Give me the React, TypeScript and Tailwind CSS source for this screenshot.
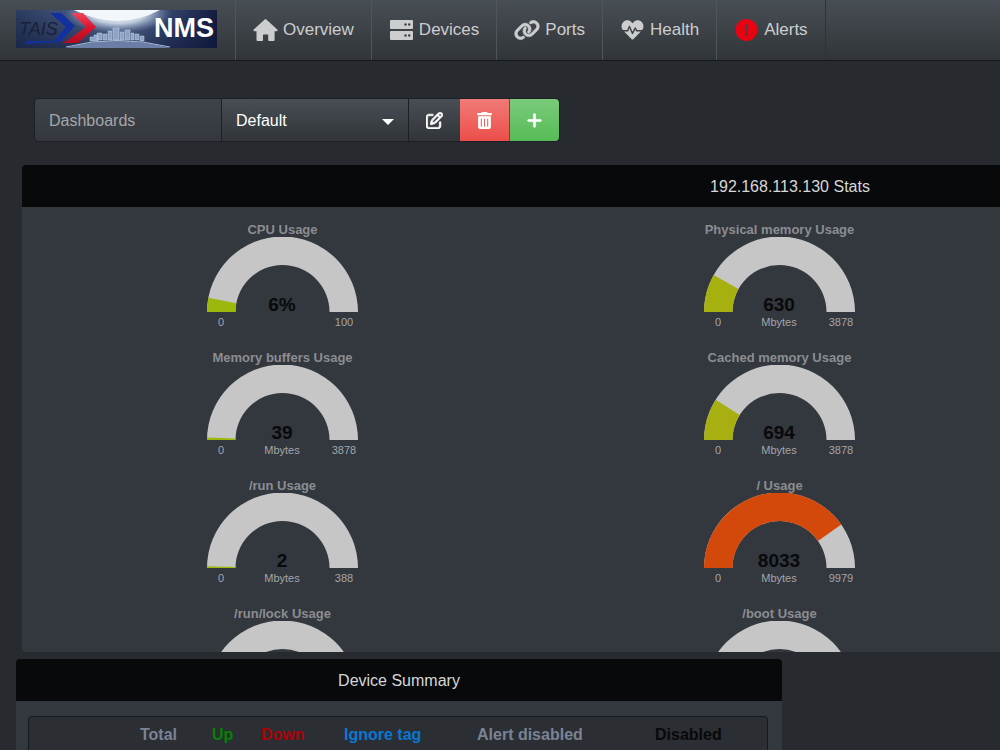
import type { ComponentType, ReactNode } from 'react'
import { FaHeartbeat } from 'react-icons/fa'
import { FaCircleExclamation, FaLink, FaPlus, FaRegPenToSquare, FaTrashCan } from 'react-icons/fa6'

type IconProps = { className?: string }

function HomeIcon({ className }: IconProps) {
  return (
    <svg viewBox="0 0 24 22" fill="currentColor" className={className}>
      <path d="M11.2.4a1.2 1.2 0 0 1 1.6 0l11 10.2c.6.6.2 1.6-.6 1.6h-2.1V21a1 1 0 0 1-1 1h-4.6a.8.8 0 0 1-.8-.8V15.600H9.500v5.600a.8.8 0 0 1-.8.8H4a1 1 0 0 1-1-1v-8.800H.8c-.8 0-1.200-1-.6-1.600Z" />
    </svg>
  )
}

function ServerIcon({ className }: IconProps) {
  return (
    <svg viewBox="0 0 23 22" className={className}>
      <g fill="currentColor">
        <rect y="1" width="23" height="9" rx="1" />
        <rect y="12" width="23" height="9" rx="1" />
      </g>
      <g fill="#3b4046">
        <circle cx="15.500" cy="5.500" r="1.200" />
        <circle cx="19.200" cy="5.500" r="1.200" />
        <circle cx="15.500" cy="16.500" r="1.200" />
        <circle cx="19.200" cy="16.500" r="1.200" />
      </g>
    </svg>
  )
}

type NavItem = {
  label: string
  icon: ComponentType<IconProps>
  iconClass: string
}

const navItems: NavItem[] = [
  { label: 'Overview', icon: HomeIcon, iconClass: 'h-[22px] w-[25px]' },
  { label: 'Devices', icon: ServerIcon, iconClass: 'h-[22px] w-[25px]' },
  { label: 'Ports', icon: FaLink, iconClass: 'h-[22px] w-[26px] stroke-current stroke-[16]' },
  { label: 'Health', icon: FaHeartbeat, iconClass: 'h-[22px] w-[25px]' },
  { label: 'Alerts', icon: FaCircleExclamation, iconClass: 'h-[22px] w-[25px] text-[#e60411]' },
]

type GaugeData = {
  title: string
  value?: number
  max?: number
  unit?: string
  suffix?: string
  color?: string
}

const gauges: GaugeData[] = [
  { title: 'CPU Usage', value: 6, max: 100, suffix: '%', color: '#9cb80d' },
  { title: 'Physical memory Usage', value: 630, max: 3878, unit: 'Mbytes', color: '#a6b10f' },
  { title: 'Memory buffers Usage', value: 39, max: 3878, unit: 'Mbytes', color: '#9cb80d' },
  { title: 'Cached memory Usage', value: 694, max: 3878, unit: 'Mbytes', color: '#a7b010' },
  { title: '/run Usage', value: 2, max: 388, unit: 'Mbytes', color: '#9cb80d' },
  { title: '/ Usage', value: 8033, max: 9979, unit: 'Mbytes', color: '#d3490b' },
  { title: '/run/lock Usage' },
  { title: '/boot Usage' },
]

const summaryColumns = [
  { label: 'Total', className: 'w-[72px] text-[#7a8394]' },
  { label: 'Up', className: 'w-[49px] text-[#068006]' },
  { label: 'Down', className: 'w-[83px] text-[#a90408]' },
  { label: 'Ignore tag', className: 'w-[133px] text-[#0878d4]' },
  { label: 'Alert disabled', className: 'w-[178px] text-[#7a8394]' },
  { label: 'Disabled', className: 'text-[#08090b]' },
]

const CX = 75.5
const CY = 75
const OUTER = 75.5
const INNER = 47

// half ring slice, from the left end up to the given ratio
function arcPath(ratio: number) {
  const angle = Math.PI * (1 - ratio)
  const cos = Math.cos(angle)
  const sin = Math.sin(angle)
  return [
    `M ${CX - OUTER} ${CY}`,
    `A ${OUTER} ${OUTER} 0 0 1 ${CX + OUTER * cos} ${CY - OUTER * sin}`,
    `L ${CX + INNER * cos} ${CY - INNER * sin}`,
    `A ${INNER} ${INNER} 0 0 0 ${CX - INNER} ${CY}`,
    'Z',
  ].join(' ')
}

function Gauge({ title, value, max, unit, suffix = '', color }: GaugeData) {
  return (
    <div className="flex h-32 flex-col items-center">
      <h3 className="text-[13px] leading-[14px] font-bold text-[#8b8d91]">{title}</h3>
      <svg width="151" height="94" viewBox="0 0 151 94" className="shrink-0" textAnchor="middle">
        <path d={arcPath(1)} fill="#c6c6c6" />
        {value !== undefined && max !== undefined && (
          <>
            {/* tiny values still get a visible sliver */}
            <path d={arcPath(Math.max(value / max, 0.007))} fill={color} />
            <text x="75" y="74" fontSize="19" fontWeight="700" fill="#08090b">
              {value}
              {suffix}
            </text>
            <g fontSize="11" fill="#a4a6a9">
              <text x="14" y="89">0</text>
              {unit && <text x="75" y="89">{unit}</text>}
              <text x="137" y="89">{max}</text>
            </g>
          </>
        )}
      </svg>
    </div>
  )
}

function Logo() {
  return (
    <svg width="201" height="38" viewBox="0 0 201 38" role="img" aria-label="TAIS NMS">
      <defs>
        <linearGradient id="sky" x1="0" x2="1">
          <stop offset="0" stopColor="#2f4064" />
          <stop offset="0.3" stopColor="#4c5f86" />
          <stop offset="0.52" stopColor="#7289ad" />
          <stop offset="0.75" stopColor="#3c4c76" />
          <stop offset="1" stopColor="#141d40" />
        </linearGradient>
        <linearGradient id="shade" x1="0" x2="0" y1="0" y2="1">
          <stop offset="0" stopColor="#0c1638" stopOpacity="0.1" />
          <stop offset="1" stopColor="#0c1638" stopOpacity="0.6" />
        </linearGradient>
        <radialGradient id="glow">
          <stop offset="0" stopColor="#fff" />
          <stop offset="0.5" stopColor="#dfe9f4" stopOpacity="0.8" />
          <stop offset="1" stopColor="#7f9cc4" stopOpacity="0" />
        </radialGradient>
        <linearGradient id="red" x1="0" x2="0" y1="0" y2="1">
          <stop offset="0" stopColor="#f0445c" />
          <stop offset="0.5" stopColor="#d8142c" />
          <stop offset="1" stopColor="#b00c20" />
        </linearGradient>
        <clipPath id="banner">
          <rect width="201" height="38" />
        </clipPath>
      </defs>
      <g clipPath="url(#banner)">
        <rect width="201" height="38" fill="url(#sky)" />
        <rect width="201" height="38" fill="url(#shade)" />
        <ellipse cx="102" cy="4" rx="54" ry="19" fill="url(#glow)" />
        <path d="M58 0 Q102 22 144 0 Z" fill="#f2f7fb" />
        <path d="M50 38 Q100 24 154 38 Z" fill="#6b7ea6" />
        <path d="M50 37 Q100 24 154 37" fill="none" stroke="#a9bcd6" strokeWidth="1" />
        <path
          d="M74 31v-4h4v-2h4v6ZM81 30v-7h5v7ZM87 30v-6h4v6ZM92 30v-9h4v9ZM97 30V18h6v12ZM104 30v-8h4v8ZM109 30v-10h5v10ZM115 30v-7h3v7ZM119 30v-6h4v6ZM124 31v-5h4v5Z"
          fill="#8ea4c6"
          stroke="#c3d1e4"
          strokeWidth="0.5"
        />
        <path d="M34 3h11l14 13-15 16-37 2 5-3h26l12-14Z" fill="#12309f" />
        <path d="M55 3h12l13 14-18 16H46l6-3 18-13Z" fill="url(#red)" />
        <text x="3" y="25" fontSize="18" fontStyle="italic" fontWeight="400" fill="#192137">
          TAIS
        </text>
        <text x="138" y="27" fontSize="27" fontWeight="700" fill="#fff">
          NMS
        </text>
      </g>
    </svg>
  )
}

function PanelHeading({ children }: { children: ReactNode }) {
  return (
    <h2 className="flex h-[42px] items-center justify-center rounded-t bg-[#08090b] pt-[2px] text-base text-[#d6d7d8]">
      {children}
    </h2>
  )
}

export default function App() {
  return (
    <div className="flex h-screen flex-col overflow-hidden bg-[#272b30] font-['Liberation_Sans',Arial,sans-serif] text-base text-[#c8c8c8]">
      {/* Top navigation */}
      <header className="flex h-[61px] shrink-0 border-b border-[#17191c] bg-linear-to-b from-[#484e55] via-[#3a3f44] via-60% to-[#313539]">
        <a href="#" className="flex w-[235px] pt-[10px] pl-4">
          <Logo />
        </a>
        <nav className="flex border-l border-[#50555b] text-[17px]">
          {navItems.map(({ label, icon: Icon, iconClass }) => (
            <a
              key={label}
              href="#"
              className="flex items-center gap-[5px] border-r border-[#50555b] px-[17px] text-[#cccdce] last:border-[#2f3338]"
            >
              <Icon className={iconClass} />
              {label}
            </a>
          ))}
        </nav>
      </header>

      {/* Dashboard picker */}
      <div className="mt-[37px] ml-[34px] flex h-11 shrink-0 self-start rounded border border-[#1d2024]">
        <label
          htmlFor="dashboard"
          className="flex w-[186px] items-center rounded-l bg-linear-to-b from-[#3e434a] to-[#34383e] pt-[2px] pl-[14px] text-[#a5a7aa]"
        >
          Dashboards
        </label>
        <div className="relative w-[187px] border-l border-[#1d2024]">
          <select
            id="dashboard"
            className="h-full w-full appearance-none bg-linear-to-b from-[#484e55] via-[#3a3f44] via-60% to-[#313539] pt-[2px] pl-[14px] text-white"
          >
            <option>Default</option>
          </select>
          <svg
            width="12"
            height="6"
            viewBox="0 0 12 6"
            className="pointer-events-none absolute top-5 right-[14px]"
          >
            <path d="M0 0h12L6 6Z" fill="#fff" />
          </svg>
        </div>
        <button
          aria-label="Edit dashboard"
          className="flex w-[52px] items-center justify-center border-l border-[#1d2024] bg-linear-to-b from-[#484e55] via-[#3a3f44] via-60% to-[#313539] text-white"
        >
          <FaRegPenToSquare className="h-[17px] w-[17px] stroke-current stroke-[20]" />
        </button>
        <button
          aria-label="Remove dashboard"
          className="flex w-[49px] items-center justify-center bg-linear-to-b from-[#f17a77] to-[#ec4d49] text-white"
        >
          <FaTrashCan className="h-[17px] w-[17px]" />
        </button>
        <button
          aria-label="New dashboard"
          className="flex w-[50px] items-center justify-center rounded-r border-l border-[#2f6b33] bg-linear-to-b from-[#7acb7a] to-[#56bb56] text-white"
        >
          <FaPlus className="h-[17px] w-[17px] stroke-current stroke-[20]" />
        </button>
      </div>

      {/* Wide widget, runs past the right edge of the window */}
      <section className="mt-[23px] ml-[22px] w-[153.6%] shrink-0">
        <PanelHeading>192.168.113.130 Stats</PanelHeading>
        <div className="grid h-[445px] grid-cols-3 content-start overflow-hidden rounded-b bg-[#33373e] pt-4 pr-[33px] pl-3">
          {gauges.map((gauge, i) => (
            <div key={gauge.title} className={i % 2 === 0 ? 'col-start-1' : 'col-start-2'}>
              <Gauge {...gauge} />
            </div>
          ))}
        </div>
      </section>

      <section className="mt-[7px] ml-4 flex w-[76.6%] flex-1 flex-col">
        <PanelHeading>Device Summary</PanelHeading>
        <div className="flex-1 bg-[#33373e] pt-[15px] pr-[14px] pl-3">
          <div className="h-20 rounded border border-[#15181c] bg-[#2b2e33]">
            <table className="w-full table-fixed text-left">
              <thead>
                <tr className="h-9">
                  <td className="w-[111px]" />
                  {summaryColumns.map((column) => (
                    <th key={column.label} className={column.className}>
                      {column.label}
                    </th>
                  ))}
                </tr>
              </thead>
            </table>
          </div>
        </div>
      </section>
    </div>
  )
}
